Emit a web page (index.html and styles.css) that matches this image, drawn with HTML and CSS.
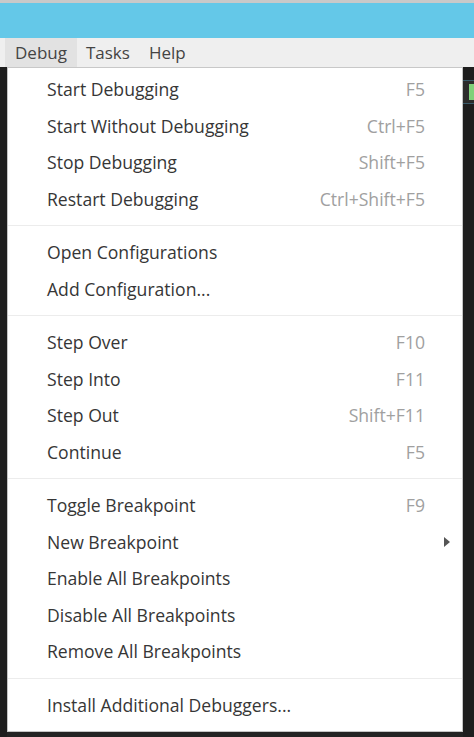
FILE: index.html
```html
<!DOCTYPE html>
<html lang="en">
<head>
  <meta charset="UTF-8">
  <meta name="viewport" content="width=device-width, initial-scale=1.0">
  <title>Debug Menu</title>
  <link rel="stylesheet" href="styles.css">
</head>
<body>

  <div class="titlebar"></div>

  <nav class="menubar">
    <span class="menubar-item active">Debug</span>
    <span class="menubar-item">Tasks</span>
    <span class="menubar-item">Help</span>
  </nav>

  <div class="workspace">
    <div class="gutter-left"></div>

    <ul class="menu">
      <li class="menu-item"><span>Start Debugging</span><span class="shortcut">F5</span></li>
      <li class="menu-item"><span>Start Without Debugging</span><span class="shortcut">Ctrl+F5</span></li>
      <li class="menu-item"><span>Stop Debugging</span><span class="shortcut">Shift+F5</span></li>
      <li class="menu-item"><span>Restart Debugging</span><span class="shortcut">Ctrl+Shift+F5</span></li>
      <li class="separator"></li>
      <li class="menu-item"><span>Open Configurations</span></li>
      <li class="menu-item"><span>Add Configuration...</span></li>
      <li class="separator"></li>
      <li class="menu-item"><span>Step Over</span><span class="shortcut">F10</span></li>
      <li class="menu-item"><span>Step Into</span><span class="shortcut">F11</span></li>
      <li class="menu-item"><span>Step Out</span><span class="shortcut">Shift+F11</span></li>
      <li class="menu-item"><span>Continue</span><span class="shortcut">F5</span></li>
      <li class="separator"></li>
      <li class="menu-item"><span>Toggle Breakpoint</span><span class="shortcut">F9</span></li>
      <li class="menu-item submenu"><span>New Breakpoint</span><span class="arrow"></span></li>
      <li class="menu-item"><span>Enable All Breakpoints</span></li>
      <li class="menu-item"><span>Disable All Breakpoints</span></li>
      <li class="menu-item"><span>Remove All Breakpoints</span></li>
      <li class="separator"></li>
      <li class="menu-item"><span>Install Additional Debuggers...</span></li>
    </ul>

    <div class="gutter-right">
      <div class="toolbar-bit">
        <span class="run-icon"></span>
      </div>
    </div>
  </div>

</body>
</html>
```

FILE: styles.css
```css
/* Reset */
* {
  margin: 0;
  padding: 0;
  box-sizing: border-box;
}

body {
  font-family: 'Open Sans', 'Noto Sans', sans-serif;
  background-color: #232323;
  width: 474px;
  height: 737px;
  overflow: hidden;
}

.titlebar {
  height: 38px;
  background-color: #64c8e8;
  border-top: 3px solid #c9c9c9;
}

.menubar {
  display: flex;
  height: 29px;
  padding-left: 5px;
  background-color: #efefef;
}

.menubar-item {
  display: flex;
  align-items: center;
  padding: 0 10px;
  font-size: 17px;
  color: #444;
  margin-right: -1px;
}

.menubar-item.active {
  background-color: #e2e2e2;
}

.workspace {
  display: flex;
  height: 670px;
}

.gutter-left {
  width: 7px;
  background-color: #1e1e1e;
}

/* Dropdown do menu */
.menu {
  list-style: none;
  width: 456px;
  height: 665px;
  background-color: #fff;
  border: 1px solid #c4c4c4;
  border-top-color: #c8c8c8;
  padding: 3px 0 8px;
}

.menu-item {
  display: flex;
  justify-content: space-between;
  align-items: center;
  height: 36.5px;
  padding: 0 37px 0 39px;
  font-size: 17.6px;
  color: #363636;
}

.shortcut {
  color: #a0a0a0;
}

.submenu {
  padding-right: 12px;
}

.arrow {
  width: 0;
  height: 0;
  border-top: 5px solid transparent;
  border-bottom: 5px solid transparent;
  border-left: 6px solid #555;
}

.separator {
  height: 1px;
  margin: 8px 0 8px;
  background-color: #ececec;
}

.gutter-right {
  flex: 1;
  background-color: #1e1e1e;
  padding-top: 13px;
}

.toolbar-bit {
  height: 24px;
  background-color: #2b2b2b;
  border-top: 1px solid #3a5a6a;
  border-bottom: 1px solid #3a5a6a;
  display: flex;
  align-items: center;
  justify-content: flex-end;
}

.run-icon {
  width: 5px;
  height: 16px;
  background-color: #7fd07a;
}
```
